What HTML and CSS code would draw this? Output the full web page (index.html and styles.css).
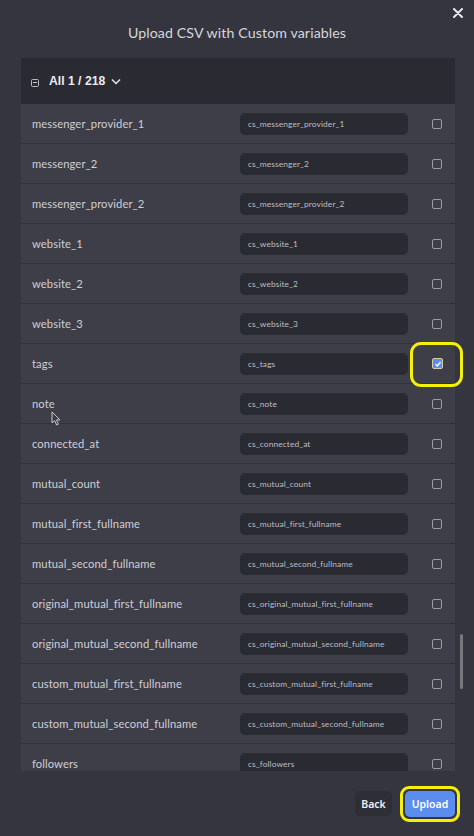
FILE: index.html
```html
<!DOCTYPE html>
<html>
<head>
<meta charset="utf-8">
<link rel="stylesheet" href="styles.css">
</head>
<body>
<div class="dialog">
  <button class="close" aria-label="close">
    <svg width="10" height="10" viewBox="0 0 10 10"><path d="M1 1L9 9M9 1L1 9" stroke="#e6e6ea" stroke-width="2" stroke-linecap="round"/></svg>
  </button>
  <h1 class="title">Upload CSV with Custom variables</h1>
  <div class="table-wrap">
    <div class="table">
      <div class="thead">
        <span class="minus-box"></span>
        <span class="all">All 1 / 218</span>
        <svg class="chev" width="10" height="7" viewBox="0 0 10 7"><path d="M1 1.5L5 5.5L9 1.5" fill="none" stroke="#e6e6ea" stroke-width="1.5"/></svg>
      </div>
      <div class="rows">
        <div class="row"><span class="name">messenger_provider_1</span><span class="input">cs_messenger_provider_1</span><span class="cb"></span></div>
        <div class="row"><span class="name">messenger_2</span><span class="input">cs_messenger_2</span><span class="cb"></span></div>
        <div class="row"><span class="name">messenger_provider_2</span><span class="input">cs_messenger_provider_2</span><span class="cb"></span></div>
        <div class="row"><span class="name">website_1</span><span class="input">cs_website_1</span><span class="cb"></span></div>
        <div class="row"><span class="name">website_2</span><span class="input">cs_website_2</span><span class="cb"></span></div>
        <div class="row"><span class="name">website_3</span><span class="input">cs_website_3</span><span class="cb"></span></div>
        <div class="row"><span class="name">tags</span><span class="input">cs_tags</span><span class="cb checked"><svg width="8" height="8" viewBox="0 0 8 8"><path d="M1.5 4.2L3.3 6L6.6 2" fill="none" stroke="#fff" stroke-width="1.4"/></svg></span></div>
        <div class="row"><span class="name">note</span><span class="input">cs_note</span><span class="cb"></span>
          <svg class="cursor" width="10" height="15" viewBox="0 0 10 15"><path d="M1 1L1 12L3.6 9.6L5.6 14L7.4 13.2L5.5 8.9L9 8.9Z" fill="#3a3a44" stroke="#c8c8cc" stroke-width="1"/></svg>
        </div>
        <div class="row"><span class="name">connected_at</span><span class="input">cs_connected_at</span><span class="cb"></span></div>
        <div class="row"><span class="name">mutual_count</span><span class="input">cs_mutual_count</span><span class="cb"></span></div>
        <div class="row"><span class="name">mutual_first_fullname</span><span class="input">cs_mutual_first_fullname</span><span class="cb"></span></div>
        <div class="row"><span class="name">mutual_second_fullname</span><span class="input">cs_mutual_second_fullname</span><span class="cb"></span></div>
        <div class="row"><span class="name">original_mutual_first_fullname</span><span class="input">cs_original_mutual_first_fullname</span><span class="cb"></span></div>
        <div class="row"><span class="name">original_mutual_second_fullname</span><span class="input">cs_original_mutual_second_fullname</span><span class="cb"></span></div>
        <div class="row"><span class="name">custom_mutual_first_fullname</span><span class="input">cs_custom_mutual_first_fullname</span><span class="cb"></span></div>
        <div class="row"><span class="name">custom_mutual_second_fullname</span><span class="input">cs_custom_mutual_second_fullname</span><span class="cb"></span></div>
        <div class="row"><span class="name">followers</span><span class="input">cs_followers</span><span class="cb"></span></div>
      </div>
    </div>
    <div class="scrollbar"><div class="thumb"></div></div>
    <span class="ring ring-cb"></span>
  </div>
  <div class="footer">
    <button class="btn back">Back</button>
    <button class="btn upload">Upload<span class="ring ring-btn"></span></button>
  </div>
</div>
</body>
</html>
```
FILE: styles.css
```css
* { box-sizing: border-box; }
html, body { margin: 0; padding: 0; }
body {
  width: 474px;
  height: 836px;
  background: #35353f;
  font-family: Lato, "Noto Sans", sans-serif;
  overflow: hidden;
}
.dialog {
  position: relative;
  height: 836px;
  display: flex;
  flex-direction: column;
}
.close {
  position: absolute;
  top: 8px;
  right: 11px;
  width: 10px;
  height: 10px;
  padding: 0;
  border: 0;
  background: none;
  display: flex;
}
.title {
  margin: 0;
  padding-top: 24px;
  height: 58px;
  text-align: center;
  font-size: 14.2px;
  font-weight: 400;
  color: #d6d6dc;
  letter-spacing: 0.1px;
}
.table-wrap {
  position: relative;
  display: flex;
  padding-left: 21px;
  height: 713px;
}
.table {
  width: 434px;
  height: 713px;
  overflow: hidden;
  background: #3e3e49;
}
.thead {
  height: 46px;
  background: #2a2a32;
  display: flex;
  align-items: center;
  padding-left: 10px;
  color: #ececf0;
}
.minus-box {
  width: 8px;
  height: 8px;
  border: 1px solid #b8b8be;
  border-radius: 1.5px;
  position: relative;
  margin-top: 3px;
}
.minus-box::after {
  content: "";
  position: absolute;
  left: 1px;
  right: 1px;
  top: 2.5px;
  height: 1px;
  background: #c8c8ce;
}
.all {
  margin-left: 10px;
  font-size: 12.2px;
  font-weight: 700;
  font-family: "Liberation Sans", Arial, sans-serif;
}
.chev { margin-left: 6px; }
.row {
  position: relative;
  height: 40px;
  display: flex;
  align-items: center;
  border-bottom: 1px solid #32323b;
}
.name {
  width: 219px;
  padding-left: 11px;
  font-size: 11.2px;
  color: #cfcfd5;
  letter-spacing: 0.1px;
}
.input {
  width: 168px;
  height: 22px;
  border-radius: 5px;
  background: #2a2a32;
  color: #bdbdc4;
  font-size: 8.4px;
  padding-left: 8px;
  display: flex;
  align-items: center;
  letter-spacing: 0.1px;
}
.cb {
  margin-left: 24px;
  width: 10px;
  height: 10px;
  border: 1.3px solid #9c9ca4;
  border-radius: 2px;
  display: flex;
  align-items: center;
  justify-content: center;
}
.cb.checked {
  width: 11px;
  height: 11px;
  background: #5b8def;
  border: 1px solid #d8cda8;
}
.ring {
  position: absolute;
  border: 3.5px solid #f4f00a;
  pointer-events: none;
}
.ring-cb {
  left: 410px;
  top: 284px;
  width: 53px;
  height: 45px;
  border-radius: 11px;
}
.cursor {
  position: absolute;
  left: 30px;
  top: 27px;
}
.scrollbar {
  width: 19px;
  position: relative;
}
.thumb {
  position: absolute;
  left: 5px;
  top: 576px;
  width: 2.5px;
  height: 55px;
  border-radius: 2px;
  background: #777780;
}
.footer {
  display: flex;
  justify-content: flex-end;
  align-items: center;
  gap: 13px;
  padding-right: 19px;
  height: 65px;
}
.btn {
  border: 0;
  font-family: "Noto Sans", Lato, sans-serif;
  font-size: 10.5px;
  font-weight: 600;
  border-radius: 5px;
  color: #f0f0f4;
  padding: 0;
  position: relative;
}
.back {
  width: 37px;
  height: 25px;
  background: #2e2e37;
}
.upload {
  width: 50px;
  height: 26px;
  background: #5b8def;
  color: #fff;
}
.ring-btn {
  left: -5px;
  top: -5px;
  width: 60px;
  height: 36px;
  border-radius: 9px;
}
```
